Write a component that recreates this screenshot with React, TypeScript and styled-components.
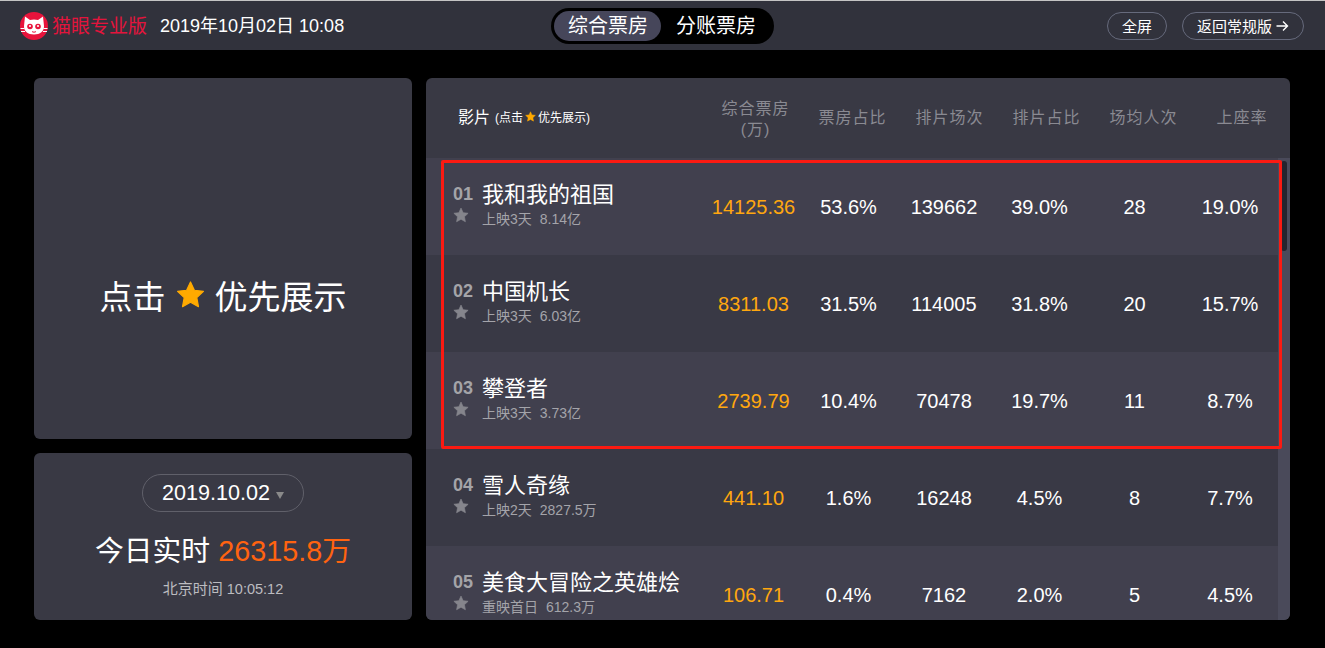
import React from "react"
import styled, { createGlobalStyle } from "styled-components"

interface Movie {
  rank: string
  name: string
  release: string
  total: string
  boxOffice: string
  boxRate: string
  shows: string
  showRate: string
  avgSeat: string
  seatRate: string
}

const movies: Movie[] = [
  { rank: "01", name: "我和我的祖国", release: "上映3天", total: "8.14亿", boxOffice: "14125.36", boxRate: "53.6%", shows: "139662", showRate: "39.0%", avgSeat: "28", seatRate: "19.0%" },
  { rank: "02", name: "中国机长", release: "上映3天", total: "6.03亿", boxOffice: "8311.03", boxRate: "31.5%", shows: "114005", showRate: "31.8%", avgSeat: "20", seatRate: "15.7%" },
  { rank: "03", name: "攀登者", release: "上映3天", total: "3.73亿", boxOffice: "2739.79", boxRate: "10.4%", shows: "70478", showRate: "19.7%", avgSeat: "11", seatRate: "8.7%" },
  { rank: "04", name: "雪人奇缘", release: "上映2天", total: "2827.5万", boxOffice: "441.10", boxRate: "1.6%", shows: "16248", showRate: "4.5%", avgSeat: "8", seatRate: "7.7%" },
  { rank: "05", name: "美食大冒险之英雄烩", release: "重映首日", total: "612.3万", boxOffice: "106.71", boxRate: "0.4%", shows: "7162", showRate: "2.0%", avgSeat: "5", seatRate: "4.5%" },
]

const columns = ["票房占比", "排片场次", "排片占比", "场均人次", "上座率"]

const GlobalStyle = createGlobalStyle`
  html, body {
    margin: 0;
    padding: 0;
    background: #000;
    font-family: "Liberation Sans", "Noto Sans CJK SC", sans-serif;
    color: #fff;
  }
`

const Page = styled.div`
  width: 1325px;
  height: 648px;
  overflow: hidden;
  background: #000;
`

const TopBar = styled.header`
  height: 49px;
  border-top: 1px solid #c4c4c4;
  background: #31323c;
  display: grid;
  grid-template-columns: 1fr auto 1fr;
  align-items: center;
  padding: 0 21px 0 21px;
`

const Brand = styled.div`
  display: flex;
  align-items: center;
  margin-left: -1px;
`

const BrandName = styled.span`
  color: #e4143c;
  font-size: 19px;
  margin: 0 0 3px 4px;
  white-space: nowrap;
`

const Clock = styled.span`
  font-size: 18px;
  margin: 0 0 3px 13px;
  white-space: nowrap;
`

const Toggle = styled.div`
  display: flex;
  align-items: center;
  height: 36px;
  margin-top: 1px;
  padding: 0 3px;
  border-radius: 18px;
  background: #000;
  box-sizing: border-box;
  width: 223px;
`

const ToggleItem = styled.div<{ $active?: boolean }>`
  width: 107px;
  height: 30px;
  line-height: 30px;
  box-sizing: border-box;
  padding-left: ${(p) => (p.$active ? "1px" : "3px")};
  text-align: center;
  font-size: 20px;
  border-radius: 15px;
  background: ${(p) => (p.$active ? "#46465a" : "transparent")};
`

const Actions = styled.div`
  display: flex;
  justify-content: flex-end;
  gap: 15px;
`

const OutlineButton = styled.div`
  height: 28px;
  box-sizing: border-box;
  border: 1px solid #666a7c;
  border-radius: 14px;
  padding: 0 14px;
  font-size: 15px;
  display: flex;
  align-items: center;
  gap: 4px;
  white-space: nowrap;
`

const Content = styled.main`
  display: flex;
  gap: 14px;
  padding: 28px 35px 0 34px;
`

const SideColumn = styled.aside`
  width: 378px;
  height: 542px;
  display: flex;
  flex-direction: column;
  gap: 14px;
`

const PromoCard = styled.section`
  height: 361px;
  box-sizing: border-box;
  padding-top: 72px;
  border-radius: 6px;
  background: #393944;
  display: flex;
  align-items: center;
  justify-content: center;
  gap: 10px;
  font-size: 33px;
`

const LiveCard = styled.section`
  flex: 1;
  border-radius: 6px;
  background: #393944;
  display: flex;
  flex-direction: column;
  align-items: center;
  padding-top: 21px;
`

const DatePill = styled.div`
  width: 162px;
  height: 38px;
  box-sizing: border-box;
  border: 1px solid #60606a;
  border-radius: 19px;
  display: flex;
  align-items: center;
  justify-content: center;
  gap: 6px;
  font-size: 21.6px;
`

const Caret = styled.span`
  width: 0;
  height: 0;
  margin-top: 4px;
  border-left: 4px solid transparent;
  border-right: 4px solid transparent;
  border-top: 7px solid #8a8a8a;
`

const LiveTotal = styled.div`
  display: flex;
  align-items: baseline;
  gap: 8px;
  margin-top: 19px;
  font-size: 28.8px;
  line-height: 40px;
`

const LiveValue = styled.span`
  color: #ff6310;
`

const LiveTime = styled.div`
  margin-top: 8px;
  font-size: 15px;
  line-height: 20px;
  color: #bcbcc0;
  display: flex;
  gap: 4px;
`

const LiveClock = styled.span`
  font-size: 14.5px;
`

const BoardPanel = styled.section`
  position: relative;
  width: 864px;
  height: 542px;
  border-radius: 6px;
  overflow: hidden;
  background: #393944;
  display: flex;
  flex-direction: column;
`

const BoardHead = styled.div`
  height: 80px;
  flex-shrink: 0;
  display: grid;
  grid-template-columns: 281px repeat(5, 97px) 100px;
  align-items: center;
  color: #8a8a92;
  font-size: 16px;
  letter-spacing: 1px;
  text-align: center;
`

const FilmHead = styled.div`
  padding-left: 32px;
  display: flex;
  align-items: center;
  color: #fff;
  text-align: left;
  letter-spacing: 0;
  margin-top: -4px;
`

const FilmHint = styled.span`
  display: inline-flex;
  align-items: center;
  gap: 2px;
  margin-left: 5px;
  font-size: 12px;
`

const HeadCell = styled.div`
  line-height: 21px;
  margin-top: -2px;
`

const WrappedHeadCell = styled(HeadCell)`
  margin-top: 1px;
`

const BoardBody = styled.div`
  flex: 1;
  min-height: 0;
  display: flex;
`

const RowList = styled.div`
  flex: 1;
  overflow: hidden;
`

const Row = styled.div<{ $odd: boolean }>`
  height: 97px;
  box-sizing: border-box;
  padding-top: 2px;
  display: grid;
  grid-template-columns: 280px 95px 95px 96px 95px 95px 96px;
  align-items: center;
  text-align: center;
  font-size: 20px;
  background: ${(p) => (p.$odd ? "#41404e" : "#393945")};
`

const FilmCell = styled.div`
  display: grid;
  grid-template-columns: 29px 1fr;
  padding-left: 27px;
  text-align: left;
  margin-top: -5px;
`

const Rank = styled.div`
  display: flex;
  flex-direction: column;
  align-items: flex-start;
  gap: 0;
  color: #a4a4a8;
  font-size: 18px;
  font-weight: 700;
  line-height: 26px;
`

const FilmName = styled.div`
  font-size: 22px;
  line-height: 28px;
  white-space: nowrap;
`

const FilmMeta = styled.div`
  display: flex;
  gap: 8px;
  color: #a4a4aa;
  font-size: 14px;
  line-height: 20px;
`

const BoxValue = styled.div`
  color: #ffa70f;
`

const ScrollTrack = styled.div`
  width: 12px;
  flex-shrink: 0;
  padding: 3px 3px 0;
  box-sizing: border-box;
  background: #4a4a5a;
`

const ScrollThumb = styled.div`
  height: 90px;
  border-radius: 3px;
  background: #25242e;
`

const Highlight = styled.div`
  position: absolute;
  left: 15px;
  top: 82px;
  width: 841px;
  height: 289px;
  box-sizing: border-box;
  border: 3px solid #fb1a12;
  border-radius: 2px;
  pointer-events: none;
`

const Star: React.FC<{ size: number; color: string }> = ({ size, color }) => (
  <svg width={size} height={size} viewBox="0 0 24 24" aria-hidden="true">
    <path
      d="M12 1.6l3.2 6.9 7.5.9-5.500 5.200 1.400 7.500L12 18.400l-6.600 3.700 1.400-7.500L1.300 9.400l7.500-.9z"
      fill={color}
      stroke={color}
      strokeWidth="1"
      strokeLinejoin="round"
    />
  </svg>
)

const CatLogo = () => (
  <svg width="28" height="28" viewBox="0 0 28 28" aria-hidden="true">
    <circle cx="14" cy="14" r="14" fill="#e8143c" />
    <path d="M5 4.500l5 3.500c2.500-.7 5.500-.7 8 0l5-3.500 1 9.500c.3 5-4 8.500-10 8.500s-10.300-3.500-10-8.500z" fill="#fff" />
    <circle cx="10" cy="14.500" r="2.800" fill="#e8143c" />
    <circle cx="18" cy="14.500" r="2.800" fill="#e8143c" />
    <circle cx="10" cy="14" r="1.100" fill="#fff" />
    <circle cx="18" cy="14" r="1.100" fill="#fff" />
    <path d="M12 19.500c1 .9 3 .9 4 0" stroke="#e8143c" strokeWidth="1" fill="none" />
    <path d="M0.500 16.500h4M1 19.500h4M23.500 16.500h4M23 19.500h4" stroke="#fff" strokeWidth="1" />
  </svg>
)

const ArrowIcon = () => (
  <svg width="13" height="12" viewBox="0 0 13 12" aria-hidden="true">
    <path d="M0.500 6h11M7 1.500L11.500 6 7 10.500" stroke="#fff" strokeWidth="1.400" fill="none" />
  </svg>
)

export default function App() {
  return (
    <Page>
      <GlobalStyle />
      <TopBar>
        <Brand>
          <CatLogo />
          <BrandName>猫眼专业版</BrandName>
          <Clock>2019年10月02日 10:08</Clock>
        </Brand>
        <Toggle>
          <ToggleItem $active>综合票房</ToggleItem>
          <ToggleItem>分账票房</ToggleItem>
        </Toggle>
        <Actions>
          <OutlineButton>全屏</OutlineButton>
          <OutlineButton>
            返回常规版
            <ArrowIcon />
          </OutlineButton>
        </Actions>
      </TopBar>

      <Content>
        <SideColumn>
          <PromoCard>
            <span>点击</span>
            <Star size={29} color="#ffaa00" />
            <span>优先展示</span>
          </PromoCard>
          <LiveCard>
            <DatePill>
              2019.10.02
              <Caret />
            </DatePill>
            <LiveTotal>
              今日实时
              <LiveValue>26315.8万</LiveValue>
            </LiveTotal>
            <LiveTime>
              北京时间
              <LiveClock>10:05:12</LiveClock>
            </LiveTime>
          </LiveCard>
        </SideColumn>

        <BoardPanel>
          <BoardHead>
            <FilmHead>
              影片
              <FilmHint>
                (点击
                <Star size={11} color="#ffaa00" />
                优先展示)
              </FilmHint>
            </FilmHead>
            <WrappedHeadCell>
              综合票房
              <br />
              (万)
            </WrappedHeadCell>
            {columns.map((label) => (
              <HeadCell key={label}>{label}</HeadCell>
            ))}
          </BoardHead>
          <BoardBody>
            <RowList>
              {movies.map((m, i) => (
                <Row key={m.rank} $odd={i % 2 === 0}>
                  <FilmCell>
                    <Rank>
                      {m.rank}
                      <Star size={16} color="#85858c" />
                    </Rank>
                    <div>
                      <FilmName>{m.name}</FilmName>
                      <FilmMeta>
                        <span>{m.release}</span>
                        <span>{m.total}</span>
                      </FilmMeta>
                    </div>
                  </FilmCell>
                  <BoxValue>{m.boxOffice}</BoxValue>
                  <div>{m.boxRate}</div>
                  <div>{m.shows}</div>
                  <div>{m.showRate}</div>
                  <div>{m.avgSeat}</div>
                  <div>{m.seatRate}</div>
                </Row>
              ))}
            </RowList>
            <ScrollTrack>
              <ScrollThumb />
            </ScrollTrack>
          </BoardBody>
          <Highlight />
        </BoardPanel>
      </Content>
    </Page>
  )
}
